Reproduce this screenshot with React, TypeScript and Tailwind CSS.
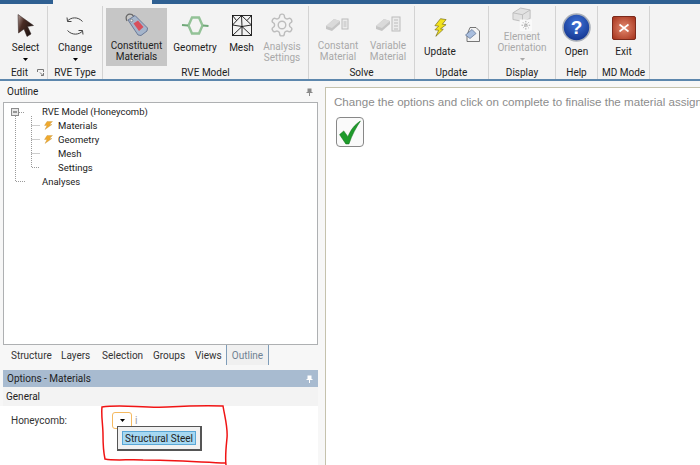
import type { ReactNode } from "react";

const Caret = ({ className = "fill-black" }: { className?: string }) => (
  <svg width="5" height="3" viewBox="0 0 5 3" className={className}>
    <path d="M0 0h5L2.5 3z" />
  </svg>
);

const Pin = ({ className }: { className: string }) => (
  <svg width="7" height="8" viewBox="0 0 7 8" className={className}>
    <path d="M1.500 0.500H5.500V4H6.500V5H4V8H3V5H0.500V4H1.500z" />
  </svg>
);

const Group = ({ width, label, children, corner }: { width: string; label: string; children: ReactNode; corner?: boolean }) => (
  <div className={`${width} flex h-[73px] shrink-0 flex-col border-r border-[#d3d3d3]`}>
    <div className="flex h-[60px] items-start">{children}</div>
    <div className={`${corner ? "pr-[8px]" : ""} relative flex h-[13px] items-center justify-center text-[10px] leading-none text-[#222]`}>
      {label}
      {corner && (
        <svg width="7" height="7" viewBox="0 0 7 7" className="absolute right-[3px] top-[3px] stroke-[#777]" fill="none">
          <path d="M0.500 3V0.500H6.500V3M3 3.500L6 6.500M4 6.500H6.500V4" />
        </svg>
      )}
    </div>
  </div>
);

const Tool = ({
  width,
  icon,
  lines,
  caret,
  disabled,
  active,
  iconBox = "h-[33px]",
}: {
  width: string;
  icon: ReactNode;
  lines: string[];
  caret?: boolean;
  disabled?: boolean;
  active?: boolean;
  iconBox?: string;
}) => (
  <div
    className={`${width} ${active ? "mt-[2px] bg-[#c6c6c6]" : ""} ${disabled ? "text-[#a9a9a9]" : "text-[#222]"} flex h-[58px] shrink-0 flex-col items-center text-center text-[10px] leading-[11px]`}
  >
    <div className={`${iconBox} flex w-full shrink-0 items-center justify-center`}>{icon}</div>
    {lines.map((l) => (
      <span key={l}>{l}</span>
    ))}
    {caret && (
      <div className="mt-[5px] flex justify-center">
        <Caret className={disabled ? "fill-[#a9a9a9]" : "fill-black"} />
      </div>
    )}
  </div>
);

const CursorIcon = () => (
  <svg width="17" height="23" viewBox="0 0 17 23">
    <defs>
      <linearGradient id="cur" x1="0" y1="0" x2="1" y2="0.600">
        <stop offset="0" stopColor="#b8a29d" />
        <stop offset="0.400" stopColor="#4a2c24" />
        <stop offset="1" stopColor="#1e1412" />
      </linearGradient>
    </defs>
    <path d="M1 0.500L16.500 11.500L10.500 12.500L14 20L10 22.500L7 15L1.500 19z" fill="url(#cur)" stroke="#2a1c1a" strokeWidth="0.500" />
  </svg>
);

const ChangeIcon = () => (
  <svg width="18" height="20" viewBox="0 0 18 20" fill="none" stroke="#444" strokeWidth="1">
    <path d="M1.500 5C5 1 12 0.500 16.500 5.500" />
    <path d="M1 1.500L1.500 5.500L5.500 5.500" />
    <path d="M16.500 15C13 19 6 19.500 1.500 14.500" />
    <path d="M17 18.500L16.500 14.500L12.500 14.500" />
  </svg>
);

const TagIcon = () => (
  <svg width="23" height="23" viewBox="0 0 23 23">
    <path d="M2 8C-0.500 3 3 0 7 1.500L10 5" fill="none" stroke="#666" strokeWidth="1.200" />
    <path d="M3 7L10 2.500L22.500 15L22 18L16 22.500L13 22z" fill="#a5b5cb" stroke="#58688a" strokeWidth="0.800" />
    <path d="M8.500 10.500L13 7.500L18.500 14L14 18z" fill="#d8505c" />
    <circle cx="6.500" cy="7.500" r="1.300" fill="#eee" stroke="#555" strokeWidth="0.500" />
  </svg>
);

const HexIcon = () => (
  <svg width="28" height="19" viewBox="0 0 28 19" fill="none">
    <path d="M7.500 9.500L11 1.500H18L21.500 9.500L18 17.500H11z" stroke="#93c297" strokeWidth="2.400" />
    <path d="M1 9L7 9.500M22 9.500L27.500 10" stroke="#6fa878" strokeWidth="2.200" />
  </svg>
);

const MeshIcon = () => (
  <svg width="20" height="21" viewBox="0 0 20 21" fill="none" stroke="#111" strokeWidth="0.900">
    <rect x="0.500" y="0.500" width="19" height="20" />
    <path d="M0.500 10L9.500 0.500L19.500 10L10 11.500L0.500 10M10 11.500L9.500 0.500M10 11.500L0.500 20.500M10 11.500L19.500 20.500M10 11.500L10 20.500M0.500 0.500L4.500 5.500M19.500 0.500L15 5.500" />
  </svg>
);

const GearIcon = () => (
  <svg width="26" height="26" viewBox="0 0 24 24" fill="none" stroke="#bdbdbd" strokeWidth="1.300">
    <path d="M12.220 2h-.440a2 2 0 0 0-2 2v.180a2 2 0 0 1-1 1.730l-.430.250a2 2 0 0 1-2 0l-.150-.080a2 2 0 0 0-2.730.730l-.220.380a2 2 0 0 0 .730 2.730l.150.100a2 2 0 0 1 1 1.720v.510a2 2 0 0 1-1 1.740l-.150.090a2 2 0 0 0-.730 2.730l.220.380a2 2 0 0 0 2.730.730l.150-.080a2 2 0 0 1 2 0l.430.250a2 2 0 0 1 1 1.730V20a2 2 0 0 0 2 2h.440a2 2 0 0 0 2-2v-.180a2 2 0 0 1 1-1.730l.430-.250a2 2 0 0 1 2 0l.150.080a2 2 0 0 0 2.730-.730l.220-.390a2 2 0 0 0-.730-2.730l-.150-.080a2 2 0 0 1-1-1.740v-.500a2 2 0 0 1 1-1.740l.150-.090a2 2 0 0 0 .730-2.730l-.220-.380a2 2 0 0 0-2.730-.730l-.150.080a2 2 0 0 1-2 0l-.430-.250a2 2 0 0 1-1-1.730V4a2 2 0 0 0-2-2z" />
    <circle cx="12" cy="12" r="3.500" />
  </svg>
);

const SolveIcon = ({ variable }: { variable?: boolean }) => (
  <svg width="26" height="17" viewBox="0 0 26 17">
    <path d="M1 10L9 3L15 5L15 8L7 15L1 13z" fill="#c5c5c5" />
    <path d="M1 10L9 3L15 5L7 12z" fill="#dadada" />
    <rect x="17" y={variable ? 1 : 3} width={variable ? 8 : 6} height={variable ? 14 : 10} fill="#ececec" stroke="#bcbcbc" />
    <path d={variable ? "M19 4h4M19 7h4M19 10h4M19 13h4" : "M18.500 6h3M18.500 8h3M18.500 10h3"} stroke="#bcbcbc" />
  </svg>
);

const BoltIcon = () => (
  <svg width="13" height="19" viewBox="0 0 14 19">
    <path d="M7 0L13 1L9 6L13 6.500L7 11L10 11.500L2 19L5 12.500L1 12L5 8L1 7.500z" fill="#f2e21c" stroke="#6f6410" strokeWidth="0.700" />
  </svg>
);

const PageIcon = () => (
  <svg width="15" height="15" viewBox="0 0 15 15">
    <path d="M5 0.500H11L14.500 4V14.500H2V8z" fill="#f4f4f4" stroke="#555" strokeWidth="0.800" />
    <path d="M0.500 8L7 2.500L11 6.500L5 11.500z" fill="#a9bede" stroke="#5a6e90" strokeWidth="0.700" />
  </svg>
);

const ElementIcon = () => (
  <svg width="21" height="25" viewBox="0 0 22 26">
    <path d="M1 6L9 1L19 3L19 12L11 15L1 13z" fill="#e2e2e2" stroke="#bdbdbd" />
    <path d="M1 6L11 8V15M11 8L19 3" fill="none" stroke="#bdbdbd" />
    <rect x="8" y="13" width="13" height="12" fill="#fafafa" />
    <path d="M14.500 14.500V23.500M10 19H19M11.500 16L17.500 22M17.500 16L11.500 22" stroke="#a6a6a6" strokeDasharray="1.500 1" />
  </svg>
);

const HelpIcon = () => (
  <svg width="29" height="29" viewBox="0 0 29 29">
    <defs>
      <radialGradient id="hlp" cx="0.500" cy="0.350" r="0.700">
        <stop offset="0" stopColor="#3f74d8" />
        <stop offset="1" stopColor="#10308a" />
      </radialGradient>
    </defs>
    <circle cx="14.500" cy="14.500" r="13.500" fill="url(#hlp)" stroke="#a9afb8" strokeWidth="1.600" />
    <text x="14.500" y="21" textAnchor="middle" fontFamily="'Liberation Sans', sans-serif" fontWeight="700" fontSize="19" fill="#fff">
      ?
    </text>
  </svg>
);

const ExitIcon = () => (
  <svg width="24" height="24" viewBox="0 0 24 24">
    <defs>
      <radialGradient id="ex" cx="0.500" cy="0.500" r="0.650">
        <stop offset="0" stopColor="#e48a70" />
        <stop offset="1" stopColor="#a8361f" />
      </radialGradient>
    </defs>
    <rect x="0.500" y="0.500" width="23" height="23" rx="1.500" fill="url(#ex)" stroke="#7b2a1c" />
    <path d="M7.500 8.500L16.500 15.500M16.500 8.500L7.500 15.500" stroke="#fff" strokeWidth="1.600" />
  </svg>
);

const TreeBolt = () => (
  <svg width="9" height="9" viewBox="0 0 9 9" className="absolute left-[-14px] top-[2px]">
    <path d="M3 0.500H8.500L5.500 3.500H8L1 8.500L3 4.500H0.500z" fill="#f0a92c" stroke="#b98a3a" strokeWidth="0.300" />
  </svg>
);

const TreeRow = ({ label, indent, bolt }: { label: string; indent: string; bolt?: boolean }) => (
  <div className={`${indent} relative h-[14px] text-[9.5px] leading-[14px] text-[#222]`}>
    {bolt && <TreeBolt />}
    {label}
  </div>
);

const tabs: [string, string][] = [
  ["Structure", "w-[50px]"],
  ["Layers", "w-[41px]"],
  ["Selection", "w-[51px]"],
  ["Groups", "w-[42px]"],
  ["Views", "w-[31px]"],
];

const App = () => {
  return (
    <div className="relative h-[465px] w-[700px] overflow-hidden bg-white font-['Roboto',sans-serif]">
      {/* top band, the active tab breaks it */}
      <div className="flex h-[4px]">
        <div className="w-[53px] bg-[#2f6092]" />
        <div className="w-[99px] bg-[#f3f3f3]" />
        <div className="flex-1 bg-[#2f6092]" />
      </div>

      {/* ribbon */}
      <div className="flex h-[77px] items-start border-b-2 border-[#5d87ad] bg-[#f3f3f3] pt-[2px]">
        <Group width="w-[48px]" label="Edit" corner>
          <Tool width="w-[51px]" icon={<CursorIcon />} lines={["Select"]} caret iconBox="h-[36px] pt-[3px]" />
        </Group>
        <Group width="w-[55px]" label="RVE Type">
          <Tool width="w-[54px]" icon={<ChangeIcon />} lines={["Change"]} caret iconBox="h-[36px] pt-[3px]" />
        </Group>
        <Group width="w-[206px]" label="RVE Model">
          <div className="flex pl-[3px]">
            <Tool width="w-[61px]" active icon={<TagIcon />} lines={["Constituent", "Materials"]} iconBox="h-[32px]" />
            <Tool width="w-[56px]" icon={<HexIcon />} lines={["Geometry"]} iconBox="h-[36px] pt-[3px]" />
            <Tool width="w-[37px]" icon={<MeshIcon />} lines={["Mesh"]} iconBox="h-[36px] pt-[3px]" />
            <Tool width="w-[44px]" disabled icon={<GearIcon />} lines={["Analysis", "Settings"]} iconBox="h-[35px] pt-[3px]" />
          </div>
        </Group>
        <Group width="w-[106px]" label="Solve">
          <div className="flex pl-[4px]">
            <Tool width="w-[50px]" disabled icon={<SolveIcon />} lines={["Constant", "Material"]} iconBox="h-[34px] pt-[3px]" />
            <Tool width="w-[50px]" disabled icon={<SolveIcon variable />} lines={["Variable", "Material"]} iconBox="h-[34px] pt-[3px]" />
          </div>
        </Group>
        <Group width="w-[74px]" label="Update">
          <div className="flex pl-[4px]">
            <Tool width="w-[42px]" icon={<BoltIcon />} lines={["Update"]} iconBox="h-[40px] pt-[3px]" />
            <div className="flex h-[36px] w-[22px] items-end justify-center">
              <PageIcon />
            </div>
          </div>
        </Group>
        <Group width="w-[67px]" label="Display">
          <Tool width="w-[66px]" disabled icon={<ElementIcon />} lines={["Element", "Orientation"]} caret iconBox="h-[25px] items-start pt-[1px]" />
        </Group>
        <Group width="w-[42px]" label="Help">
          <Tool width="w-[41px]" icon={<HelpIcon />} lines={["Open"]} iconBox="h-[40px] pt-[2px]" />
        </Group>
        <Group width="w-[52px]" label="MD Mode">
          <Tool width="w-[51px]" icon={<ExitIcon />} lines={["Exit"]} iconBox="h-[40px] pt-[4px]" />
        </Group>
      </div>

      {/* body */}
      <div className="flex h-[384px]">
        <div className="flex w-[319px] shrink-0 flex-col bg-[#f7f7f7]">
          <div className="flex h-[21px] items-center justify-between pl-[7px] pr-[6px] text-[10px] text-[#222]">
            Outline
            <Pin className="fill-[#8a8a8a]" />
          </div>
          <div className="relative ml-[3px] mr-[1px] h-[243px] border border-[#aeb0b2] bg-white pt-[2px]">
            <svg width="40" height="90" viewBox="0 0 40 90" className="absolute left-0 top-0" fill="none">
              <rect x="7.500" y="5.500" width="7" height="7" fill="#e8e8e8" stroke="#8c8c8c" />
              <path d="M9 9H13" stroke="#444" />
              <path d="M15 9.500H21M11.500 13V78.500H21M27.500 13V64.500H36M27.500 22.500H36M27.500 36.500H36M27.500 50.500H36" stroke="#9a9a9a" strokeDasharray="1 1" />
            </svg>
            <TreeRow label="RVE Model (Honeycomb)" indent="pl-[38px]" />
            <TreeRow label="Materials" indent="ml-[54px]" bolt />
            <TreeRow label="Geometry" indent="ml-[54px]" bolt />
            <TreeRow label="Mesh" indent="ml-[54px]" />
            <TreeRow label="Settings" indent="ml-[54px]" />
            <TreeRow label="Analyses" indent="pl-[38px]" />
          </div>
          <div className="flex h-[20px] items-stretch pl-[11px] text-[10px] text-[#333]">
            {tabs.map(([t, w]) => (
              <span key={t} className={`${w} flex items-center`}>
                {t}
              </span>
            ))}
            <span className="flex w-[43px] items-center justify-center border-x border-[#7f9db9] bg-[#f0f0f0] text-[#6f8192]">Outline</span>
          </div>
          <div className="mt-[5px] ml-[3px] mr-[1px] flex h-[17px] items-center justify-between bg-[#a8bbd0] pl-[4px] pr-[5px] text-[10px] text-[#222]">
            Options - Materials
            <Pin className="fill-white" />
          </div>
          <div className="ml-[3px] mr-[1px] flex h-[19px] items-center bg-[#f3f3f3] pl-[3px] text-[10px] text-[#222]">General</div>
          <div className="relative mr-[1px] flex flex-1 items-start bg-white pl-[11px] pt-[6px] text-[10px] text-[#333]">
            <span className="w-[101px] leading-[17px]">Honeycomb:</span>
            <div className="flex h-[17px] w-[20px] items-center justify-center rounded-[3px] border border-[#f5b95f] bg-white">
              <Caret />
            </div>
            <span className="ml-[3px] leading-[17px] text-[#999]">i</span>
            <div className="absolute left-[117px] top-[20px] h-[25px] w-[85px] border border-b-2 border-r-2 border-[#555] bg-[#f0f0f0] pl-[4px] pt-[4px]">
              <div className="flex h-[14px] w-[74px] items-center justify-center border border-[#5aa7d6] bg-[#a6d8f2] text-[10px] text-[#222]">
                Structural Steel
              </div>
            </div>
          </div>
        </div>

        {/* gap + right panel */}
        <div className="flex flex-1 flex-col bg-[#f7f7f7] pl-[6px] pt-[6px]">
          <div className="flex-1 border-l border-t border-[#c5c2ad] bg-white pl-[8px] pt-[7px]">
            <p className="whitespace-nowrap font-['Liberation_Sans',sans-serif] text-[11.6px] leading-[14px] text-[#8c8c8c]">
              Change the options and click on complete to finalise the material assignment
            </p>
            <div className="ml-[2px] mt-[8px] flex h-[30px] w-[28px] items-center justify-center rounded-[4px] border border-[#888] bg-[#fafafa]">
              <svg width="24" height="25" viewBox="0 0 22 24">
                <path d="M1 14L5 10.500L9 16C12 9 15 5 21 1C17 7 13 14 10 23H7z" fill="#1e9b2b" stroke="#0f6d1a" strokeWidth="0.500" />
              </svg>
            </div>
          </div>
        </div>
      </div>

      {/* red marker outline drawn over the screenshot */}
      <svg width="700" height="465" viewBox="0 0 700 465" className="pointer-events-none absolute left-0 top-0" fill="none">
        <path
          d="M226 465C225 456 226 448 227 438C228 428 225 418 223 406C205 405 185 406 167 407C140 408 122 404 102 407C101 415 103 425 103 435C103 442 103 450 105 459C115 461 130 459 143 460C170 460 200 462 226 463"
          stroke="#f01414"
          strokeWidth="1.500"
        />
      </svg>
    </div>
  );
};

export default App;
